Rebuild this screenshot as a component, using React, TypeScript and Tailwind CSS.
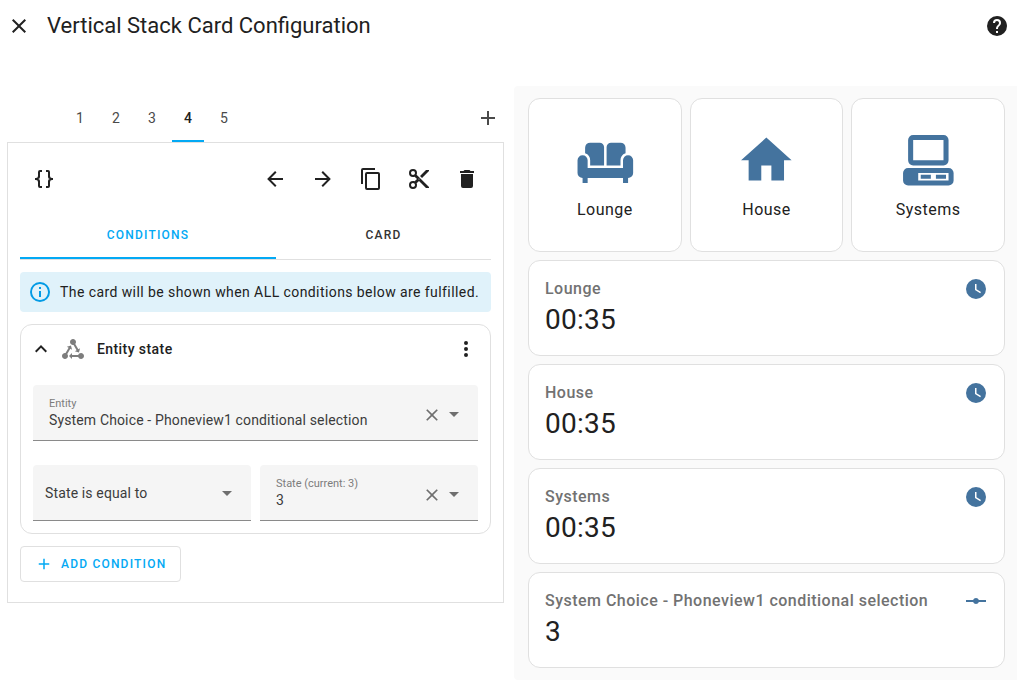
import React, { useState } from 'react';
import clsx from 'clsx';

const icons = {
  close: 'M19,6.41L17.59,5L12,10.59L6.41,5L5,6.41L10.59,12L5,17.59L6.41,19L12,13.41L17.59,19L19,17.59L13.41,12L19,6.41Z',
  help: 'M15.07,11.25L14.17,12.17C13.45,12.89 13,13.5 13,15H11V14.5C11,13.39 11.45,12.39 12.17,11.67L13.41,10.41C13.78,10.05 14,9.55 14,9C14,7.89 13.1,7 12,7A2,2 0 0,0 10,9H8A4,4 0 0,1 12,5A4,4 0 0,1 16,9C16,9.88 15.64,10.67 15.07,11.25M13,19H11V17H13M12,2A10,10 0 0,0 2,12A10,10 0 0,0 12,22A10,10 0 0,0 22,12C22,6.47 17.5,2 12,2Z',
  plus: 'M19,13H13V19H11V13H5V11H11V5H13V11H19V13Z',
  braces: 'M8,3A2,2 0 0,0 6,5V9A2,2 0 0,1 4,11H3V13H4A2,2 0 0,1 6,15V19A2,2 0 0,0 8,21H10V19H8V14A2,2 0 0,0 6,12A2,2 0 0,0 8,10V5H10V3M16,3A2,2 0 0,1 18,5V9A2,2 0 0,0 20,11H21V13H20A2,2 0 0,0 18,15V19A2,2 0 0,1 16,21H14V19H16V14A2,2 0 0,1 18,12A2,2 0 0,1 16,10V5H14V3H16Z',
  arrowLeft: 'M20,11V13H8L13.5,18.5L12.08,19.92L4.16,12L12.08,4.08L13.5,5.5L8,11H20Z',
  arrowRight: 'M4,11V13H16L10.5,18.5L11.92,19.92L19.84,12L11.92,4.08L10.5,5.5L16,11H4Z',
  copy: 'M19,21H8V7H19M19,5H8A2,2 0 0,0 6,7V21A2,2 0 0,0 8,23H19A2,2 0 0,0 21,21V7A2,2 0 0,0 19,5M16,1H4A2,2 0 0,0 2,3V17H4V3H16V1Z',
  cut: 'M19,3L13,9L15,11L22,4V3M12,12.5A0.5,0.5 0 0,1 11.5,12A0.5,0.5 0 0,1 12,11.5A0.5,0.5 0 0,1 12.5,12A0.5,0.5 0 0,1 12,12.5M6,20A2,2 0 0,1 4,18C4,16.89 4.9,16 6,16A2,2 0 0,1 8,18C8,19.11 7.1,20 6,20M6,8A2,2 0 0,1 4,6C4,4.89 4.9,4 6,4A2,2 0 0,1 8,6C8,7.11 7.1,8 6,8M9.64,7.64C9.87,7.14 10,6.59 10,6A4,4 0 0,0 6,2A4,4 0 0,0 2,6A4,4 0 0,0 6,10C6.59,10 7.14,9.87 7.64,9.64L10,12L7.64,14.36C7.14,14.13 6.59,14 6,14A4,4 0 0,0 2,18A4,4 0 0,0 6,22A4,4 0 0,0 10,18C10,17.41 9.87,16.86 9.64,16.36L12,14L19,21H22V20L9.64,7.64Z',
  trash: 'M19,4H15.5L14.5,3H9.5L8.5,4H5V6H19M6,19A2,2 0 0,0 8,21H16A2,2 0 0,0 18,19V7H6V19Z',
  info: 'M11,9H13V7H11M12,20C7.59,20 4,16.41 4,12C4,7.59 7.59,4 12,4C16.41,4 20,7.59 20,12C20,16.41 16.41,20 12,20M12,2A10,10 0 0,0 2,12A10,10 0 0,0 12,22A10,10 0 0,0 22,12A10,10 0 0,0 12,2M11,17H13V11H11V17Z',
  chevronUp: 'M7.41,15.41L12,10.83L16.59,15.41L18,14L12,8L6,14L7.41,15.41Z',
  dots: 'M12,16A2,2 0 0,1 14,18A2,2 0 0,1 12,20A2,2 0 0,1 10,18A2,2 0 0,1 12,16M12,10A2,2 0 0,1 14,12A2,2 0 0,1 12,14A2,2 0 0,1 10,12A2,2 0 0,1 12,10M12,4A2,2 0 0,1 14,6A2,2 0 0,1 12,8A2,2 0 0,1 10,6A2,2 0 0,1 12,4Z',
  menuDown: 'M7,10L12,15L17,10H7Z',
  stateMachine: 'M6.27 17.05C6.72 17.58 7 18.25 7 19C7 20.66 5.66 22 4 22S1 20.66 1 19 2.34 16 4 16C4.18 16 4.36 16 4.53 16.05L7.6 10.69L5.86 9.7L9.95 8.58L11.07 12.67L9.33 11.68L6.27 17.05M20 16C18.7 16 17.6 16.84 17.18 18H11V16L8 19L11 22V20H17.18C17.6 21.16 18.7 22 20 22C21.66 22 23 20.66 23 19S21.66 16 20 16M12 8C12.18 8 12.36 8 12.53 7.95L15.6 13.31L13.86 14.3L17.95 15.42L19.07 11.33L17.33 12.32L14.27 6.95C14.72 6.42 15 5.75 15 5C15 3.34 13.66 2 12 2S9 3.34 9 5 10.34 8 12 8Z',
  clock: 'M12,2A10,10 0 0,0 2,12A10,10 0 0,0 12,22A10,10 0 0,0 22,12A10,10 0 0,0 12,2M16.2,16.2L11,13V7H12.5V12.2L17,14.9L16.2,16.2Z',
  vertex: 'M2,11H9.17C9.58,9.83 10.69,9 12,9C13.31,9 14.42,9.83 14.83,11H22V13H14.83C14.42,14.17 13.31,15 12,15C10.69,15 9.58,14.17 9.17,13H2V11Z',
  home: 'M10,20V14H14V20H19V12H22L12,3L2,12H5V20H10Z',
  sofa: 'M5,15V12A2,2 0 0,0 1,12V17A2,2 0 0,0 3,19V21H5V19H19V21H21V19A2,2 0 0,0 23,17V12A2,2 0 0,0 19,12V15H5M11.5,14H6V12A3,3 0 0,0 4,9.17V7A2,2 0 0,1 6,5H9.75A1.75,1.75 0 0,1 11.5,6.75V14M12.5,14H18V12A3,3 0 0,1 20,9.17V7A2,2 0 0,0 18,5H14.25A1.75,1.75 0 0,0 12.5,6.75V14Z',
  desktop: 'M6,2H18A2,2 0 0,1 20,4V12A2,2 0 0,1 18,14H6A2,2 0 0,1 4,12V4A2,2 0 0,1 6,2M6,4V12H18V4H6M4,15H20A2,2 0 0,1 22,17V20A2,2 0 0,1 20,22H4A2,2 0 0,1 2,20V17A2,2 0 0,1 4,15M8,17V20H20V17H8M9,17.75H13V19.25H9V17.75M15,17.75H19V19.25H15V17.75Z',
};

type IconName = keyof typeof icons;

function Icon({ name, className = 'size-6' }: { name: IconName; className?: string }) {
  return (
    <svg viewBox="0 0 24 24" fill="currentColor" fillRule="evenodd" className={clsx('shrink-0', className)} aria-hidden="true">
      <path d={icons[name]} />
    </svg>
  );
}

function IconButton({ name, label }: { name: IconName; label: string }) {
  return (
    <button type="button" aria-label={label} className="flex size-12 items-center justify-center">
      <Icon name={name} />
    </button>
  );
}

interface ComboFieldProps {
  id: string;
  label: string;
  initial: string;
}

function ComboField({ id, label, initial }: ComboFieldProps) {
  const [value, setValue] = useState(initial);

  return (
    <div className="flex h-14 items-center rounded-t border-b border-[#8a8a8a] bg-[#f5f5f5] pr-3 pl-4">
      <div className="flex min-w-0 flex-1 flex-col">
        <label htmlFor={id} className="text-[11px] leading-[14px] text-[#7c7c7c]">
          {label}
        </label>
        <input
          id={id}
          value={value}
          onChange={(e) => setValue(e.target.value)}
          className="w-full bg-transparent text-sm leading-[18px] tracking-[0.01em] text-[#3c3c3c] outline-none"
        />
      </div>
      <button type="button" aria-label={`Clear ${label}`} onClick={() => setValue('')} className="pt-1 text-[#6f6f6f]">
        <Icon name="close" className="size-5" />
      </button>
      <button type="button" aria-label={`Open ${label}`} className="pt-0.5 text-[#6f6f6f]">
        <Icon name="menuDown" />
      </button>
    </div>
  );
}

const shortcuts: { name: string; icon: IconName }[] = [
  { name: 'Lounge', icon: 'sofa' },
  { name: 'House', icon: 'home' },
  { name: 'Systems', icon: 'desktop' },
];

const entities: { name: string; state: string; icon: IconName }[] = [
  { name: 'Lounge', state: '00:35', icon: 'clock' },
  { name: 'House', state: '00:35', icon: 'clock' },
  { name: 'Systems', state: '00:35', icon: 'clock' },
  { name: 'System Choice - Phoneview1 conditional selection', state: '3', icon: 'vertex' },
];

function Preview() {
  return (
    <section aria-label="Preview" className="flex flex-col gap-2 rounded-l bg-[#fafafa] py-3 pr-3 pl-3.5">
      <div className="grid grid-cols-3 gap-2">
        {shortcuts.map((item) => (
          <button
            key={item.name}
            type="button"
            className="flex aspect-square flex-col items-center justify-center gap-2 rounded-xl border border-[#e0e0e0] bg-white pt-0.5"
          >
            <Icon name={item.icon} className="w-2/5 text-[#44739e]" />
            <span className="text-base leading-6 tracking-[0.03em]">{item.name}</span>
          </button>
        ))}
      </div>
      {entities.map((entity) => (
        <article key={entity.name} className="flex h-24 justify-between rounded-xl border border-[#e0e0e0] bg-white p-4">
          <div className="min-w-0">
            <h2 className="truncate text-base leading-6 font-medium tracking-[0.03em] text-[#727272]">{entity.name}</h2>
            <p className="pt-[3px] text-[28px] leading-8 tracking-[0.01em]">{entity.state}</p>
          </div>
          <Icon name={entity.icon} className="size-6 text-[#44739e]" />
        </article>
      ))}
    </section>
  );
}

export default function App() {
  const [tab, setTab] = useState(4);
  const [view, setView] = useState('Conditions');

  return (
    <div className="min-h-screen bg-white font-[Roboto,sans-serif] text-[#212121]">
      <header className="flex h-[52px] items-center pr-2 pl-[7px]">
        <button type="button" aria-label="Close">
          <Icon name="close" />
        </button>
        <h1 className="flex-1 pl-4 text-[22px] leading-7">Vertical Stack Card Configuration</h1>
        <a href="#help" aria-label="Help">
          <Icon name="help" />
        </a>
      </header>

      <main className="grid grid-cols-[497fr_503fr] items-start gap-[10px] pt-[34px] pl-[7px]">
        <div className="pt-2">
          <div className="flex items-center justify-between pr-1 pl-[57px] text-[#4a4a4a]">
            <div role="tablist" className="flex gap-1">
              {[1, 2, 3, 4, 5].map((n) => (
                <button
                  key={n}
                  type="button"
                  role="tab"
                  aria-selected={n === tab}
                  onClick={() => setTab(n)}
                  className={clsx(
                    'h-12 w-8 border-y-2 border-t-transparent text-sm',
                    n === tab ? 'border-b-[#03a9f4] font-medium text-[#212121]' : 'border-b-transparent',
                  )}
                >
                  {n}
                </button>
              ))}
            </div>
            <button type="button" aria-label="Add card">
              <Icon name="plus" />
            </button>
          </div>

          <section className="border border-[#e0e0e0] px-3 pt-3 pb-5">
            <div className="flex justify-between">
              <IconButton name="braces" label="Show code editor" />
              <div className="flex">
                <IconButton name="arrowLeft" label="Move left" />
                <IconButton name="arrowRight" label="Move right" />
                <IconButton name="copy" label="Copy" />
                <IconButton name="cut" label="Cut" />
                <IconButton name="trash" label="Delete" />
              </div>
            </div>

            <div role="tablist" className="mt-2 grid grid-cols-[256fr_215fr] border-b border-[#e0e0e0]">
              {['Conditions', 'Card'].map((name) => (
                <button
                  key={name}
                  type="button"
                  role="tab"
                  aria-selected={name === view}
                  onClick={() => setView(name)}
                  className={clsx(
                    'h-12 border-y-2 border-t-transparent text-xs font-medium tracking-widest uppercase',
                    name === view ? 'border-b-[#03a9f4] text-[#03a9f4]' : 'border-b-transparent text-[#333333]',
                  )}
                >
                  {name}
                </button>
              ))}
            </div>

            <div role="alert" className="mt-3 flex h-10 items-center gap-2 rounded bg-[#e0f2fa] px-2 text-sm tracking-[0.03em] whitespace-nowrap">
              <Icon name="info" className="size-6 text-[#039be5]" />
              The card will be shown when ALL conditions below are fulfilled.
            </div>

            <div className="mt-3 rounded-xl border border-[#e0e0e0]">
              <div className="flex h-12 items-center pl-2">
                <button type="button" aria-label="Collapse">
                  <Icon name="chevronUp" />
                </button>
                <Icon name="stateMachine" className="ml-2 size-6 text-[#7d7d7d]" />
                <h3 className="flex-1 pl-3 text-sm font-medium tracking-[0.03em]">Entity state</h3>
                <IconButton name="dots" label="Condition menu" />
              </div>
              <div className="flex flex-col gap-6 p-3">
                <ComboField id="entity" label="Entity" initial="System Choice - Phoneview1 conditional selection" />
                <div className="grid grid-cols-2 gap-[9px]">
                  <div className="relative">
                    <select
                      aria-label="Comparison"
                      className="h-14 w-full appearance-none rounded-t border-b border-[#8a8a8a] bg-[#f5f5f5] pr-10 pl-3 text-sm tracking-[0.01em] text-[#3c3c3c] outline-none"
                    >
                      <option>State is equal to</option>
                      <option>State is not equal to</option>
                    </select>
                    <Icon name="menuDown" className="pointer-events-none absolute top-4 right-3 size-6 text-[#6f6f6f]" />
                  </div>
                  <ComboField id="state" label="State (current: 3)" initial="3" />
                </div>
              </div>
            </div>

            <button
              type="button"
              className="mt-3 flex h-9 items-center gap-2 rounded border border-[#e0e0e0] px-[14px] text-xs font-medium tracking-widest text-[#03a9f4] uppercase"
            >
              <Icon name="plus" className="size-[18px]" />
              Add condition
            </button>
          </section>
        </div>

        <Preview />
      </main>
    </div>
  );
}
